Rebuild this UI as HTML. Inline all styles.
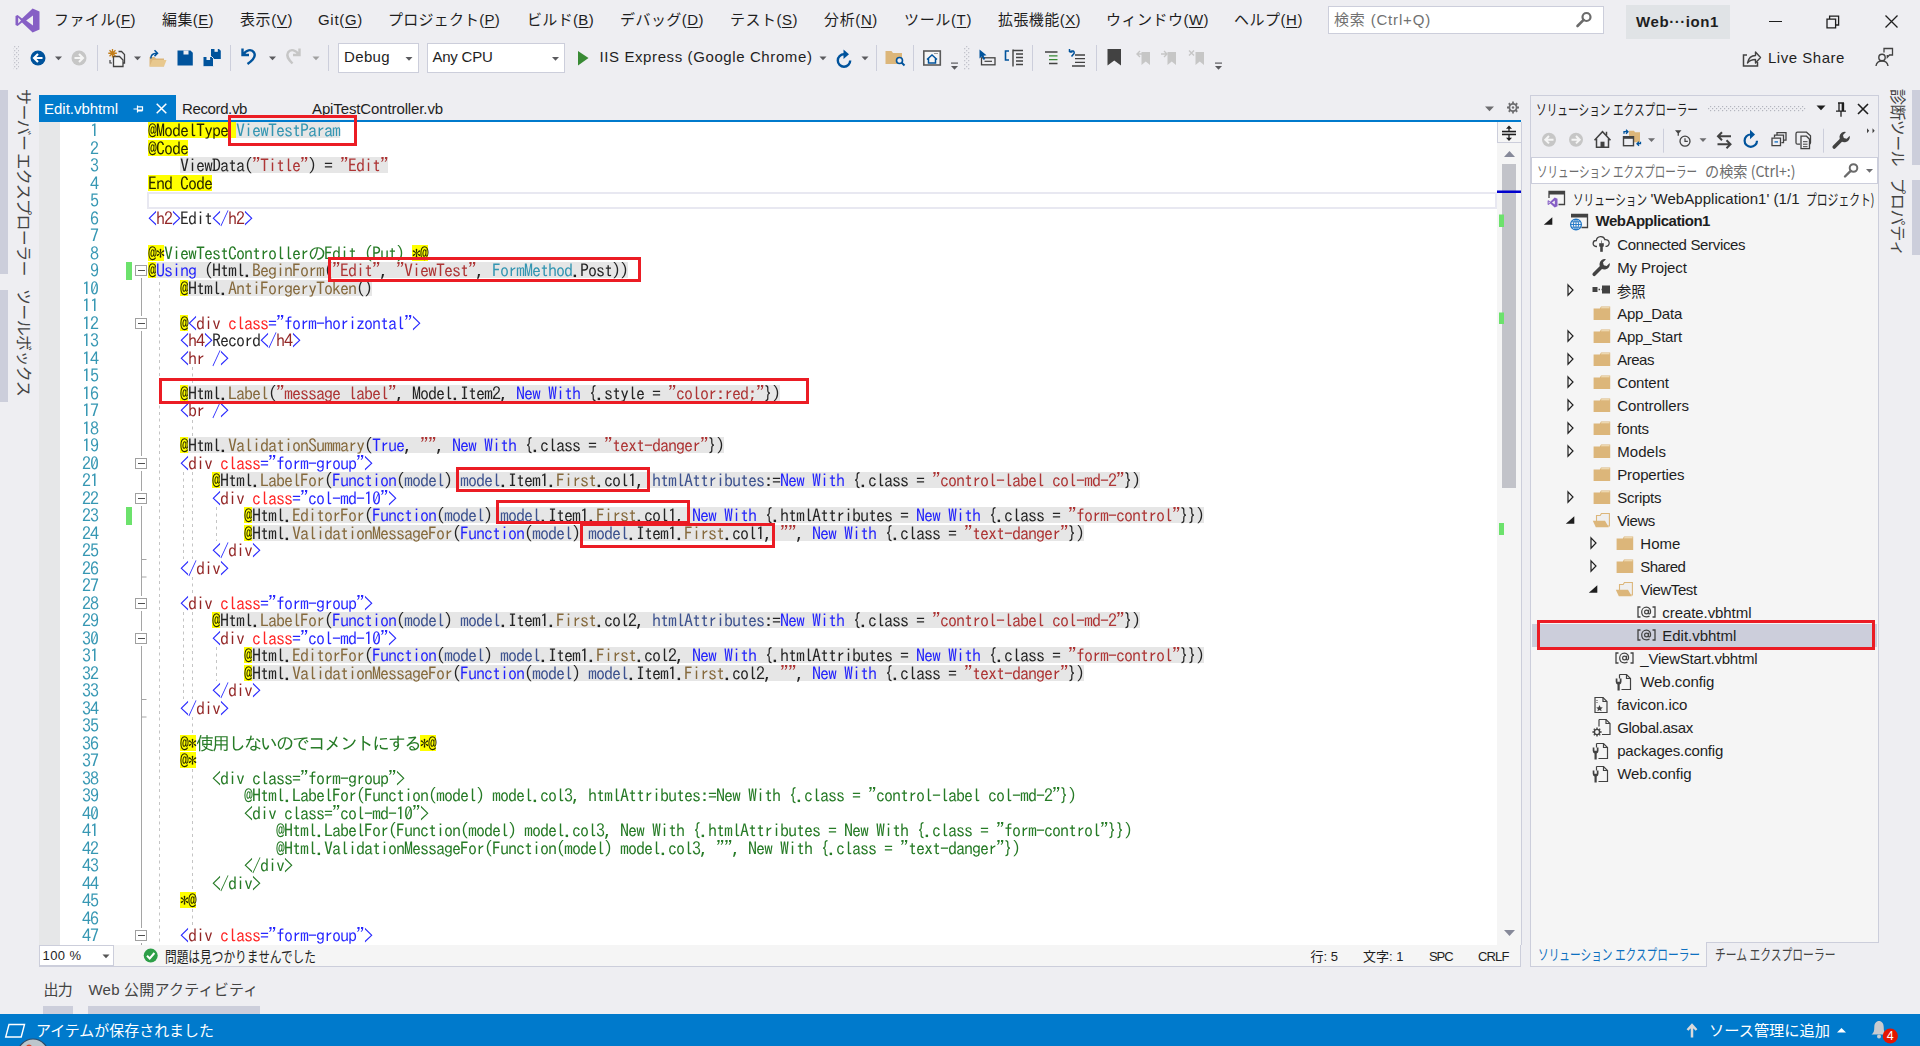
<!DOCTYPE html>
<html lang="ja"><head><meta charset="utf-8"><title>WebApplication1 - Microsoft Visual Studio</title>
<style>
*{box-sizing:border-box;margin:0;padding:0}
html,body{width:1920px;height:1046px;overflow:hidden;background:#EEEEF2}
body{position:relative;font-family:"Liberation Sans","Noto Sans CJK JP",sans-serif;font-size:15px;color:#1E1E1E}
.a{position:absolute;white-space:nowrap}
.t{position:absolute;white-space:nowrap;line-height:20px;height:20px}
u{text-decoration:underline;text-underline-offset:2px}
.menu{top:10px;font-size:15px;}
.jp{font-family:"Noto Sans CJK JP","Liberation Sans",sans-serif}
svg{position:absolute;overflow:visible}
.code{font-family:"IPAGothic","Liberation Mono",monospace;font-size:18px;letter-spacing:-1px;line-height:16px;height:16px;white-space:pre;position:absolute;left:148px;color:rgba(0,0,0,.85);will-change:transform}
.code span{display:inline-block;height:16px;vertical-align:top}
.ln{position:absolute;left:60px;width:38px;text-align:right;font-family:"IPAGothic","Liberation Mono",monospace;font-size:18px;letter-spacing:-1px;line-height:16px;height:16px;color:rgba(43,145,175,.95);will-change:transform}
.y{background:#FFFF00}.g{background:#E6E6E6}
.kw{color:rgba(0,0,255,0.85)}.st{color:rgba(163,21,21,0.85)}.ty{color:rgba(43,145,175,0.95)}.fn{color:rgba(116,83,31,0.85)}.pm{color:rgba(31,55,127,0.85)}
.tg{color:rgba(128,0,0,0.85)}.at{color:rgba(255,0,0,0.85)}.cm{color:rgba(0,100,0,0.85)}
.red{position:absolute;border:3px solid #EB1C24}
.fw{letter-spacing:-2px}
.tree{position:absolute;font-size:15px;line-height:20px;height:20px;white-space:nowrap;color:#1E1E1E}
</style></head><body>
<!-- ===== title / menu bar ===== -->
<svg style="left:15px;top:8px" width="25" height="25" viewBox="0 0 25 25"><path d="M17.6 0.5 L24.5 3.4 V21.6 L17.6 24.5 L7 14.6 L2.6 18.1 L0.5 17 V8 L2.6 6.9 L7 10.4 Z M3.2 9.6 V15.4 L6 12.5 Z M11.2 12.5 L18 17.6 V7.4 Z" fill="#865FC5" fill-rule="evenodd"/></svg>
<span class="t menu" style="letter-spacing:0.404px;left:54px">ファイル(<u>F</u>)</span>
<span class="t menu" style="letter-spacing:0.397px;left:162px">編集(<u>E</u>)</span>
<span class="t menu" style="letter-spacing:0.597px;left:240px">表示(<u>V</u>)</span>
<span class="t menu" style="letter-spacing:0.693px;left:318px">Git(<u>G</u>)</span>
<span class="t menu" style="letter-spacing:0.220px;left:388px">プロジェクト(<u>P</u>)</span>
<span class="t menu" style="letter-spacing:0.331px;left:527px">ビルド(<u>B</u>)</span>
<span class="t menu" style="letter-spacing:0.451px;left:620px">デバッグ(<u>D</u>)</span>
<span class="t menu" style="letter-spacing:0.497px;left:730px">テスト(<u>S</u>)</span>
<span class="t menu" style="letter-spacing:0.631px;left:824px">分析(<u>N</u>)</span>
<span class="t menu" style="letter-spacing:0.638px;left:904px">ツール(<u>T</u>)</span>
<span class="t menu" style="letter-spacing:0.426px;left:998px">拡張機能(<u>X</u>)</span>
<span class="t menu" style="letter-spacing:0.479px;left:1106px">ウィンドウ(<u>W</u>)</span>
<span class="t menu" style="letter-spacing:0.526px;left:1234px">ヘルプ(<u>H</u>)</span>
<div class="a" style="left:1328px;top:6px;width:276px;height:28px;background:#fff;border:1px solid #CCCEDB"></div>
<span class="t" style="letter-spacing:0.825px;left:1334px;top:10px;color:#717171">検索 (Ctrl+Q)</span>
<svg style="left:1576px;top:11px" width="17" height="17" viewBox="0 0 17 17"><circle cx="10.5" cy="6" r="4" fill="none" stroke="#6B6B6B" stroke-width="2.2"/><path d="M7.6 8.9 L1.5 15" stroke="#6B6B6B" stroke-width="2.6" stroke-linecap="round"/></svg>
<div class="a" style="left:1626px;top:5px;width:104px;height:34px;background:#E0E3E6"></div>
<span class="t" style="letter-spacing:0.578px;left:1636px;top:12px;font-weight:bold;font-size:15px">Web···ion1</span>
<div class="a" style="left:1769px;top:20.5px;width:13px;height:1.3px;background:#1E1E1E"></div>
<svg style="left:1826px;top:15px" width="14" height="14" viewBox="0 0 14 14"><path d="M1 4.2 h8.6 v8.6 h-8.6 z M3.6 4 v-2.8 h9 v8.8 h-2.8" fill="none" stroke="#1E1E1E" stroke-width="1.3"/></svg>
<svg style="left:1885px;top:15px" width="13" height="13" viewBox="0 0 13 13"><path d="M0.5 0.5 L12.5 12.5 M12.5 0.5 L0.5 12.5" stroke="#1E1E1E" stroke-width="1.3"/></svg>
<!-- ===== toolbar ===== -->
<svg style="left:0;top:40px" width="1920" height="40" viewBox="0 40 1920 40">
<defs>
<pattern id="grip" width="4" height="4" patternUnits="userSpaceOnUse"><rect x="0" y="0" width="1.3" height="1.3" fill="#C3C4CC"/><rect x="2" y="2" width="1.3" height="1.3" fill="#C3C4CC"/></pattern>
</defs>
<rect x="13" y="46" width="6" height="24" fill="url(#grip)"/>
<rect x="964" y="46" width="6" height="24" fill="url(#grip)"/>
<rect x="338.5" y="43.500" width="80" height="29" fill="#fff" stroke="#CCCEDB"/>
<rect x="427.500" y="43.500" width="137" height="29" fill="#fff" stroke="#CCCEDB"/>
<g fill="#5A5A5E">
<path d="M55 56.5 h7 l-3.5 3.8z"/><path d="M134 56.5 h7 l-3.5 3.8z"/><path d="M269 56.5 h7 l-3.5 3.8z"/>
<path d="M405.5 57 h7 l-3.5 3.8z"/><path d="M552 57 h7 l-3.5 3.8z"/>
<path d="M819.5 56.5 h7 l-3.5 3.8z"/><path d="M861.5 56.5 h7 l-3.5 3.8z"/>
<path d="M951 66 h7 l-3.5 3.8z"/><rect x="951" y="62.5" width="7" height="1.2"/>
<path d="M1215 66 h7 l-3.5 3.8z"/><rect x="1215" y="62.5" width="7" height="1.2"/>
</g>
<path d="M312.5 56.5 h7 l-3.5 3.8z" fill="#A0A0A0"/>
<g stroke="#CCCEDB" stroke-width="1"><path d="M97.5 45v26M230.5 45v26M328.5 45v26M876.5 45v26M913.5 45v26M1032.5 45v26M1096.5 45v26"/></g>
<!-- back / forward -->
<circle cx="38" cy="58" r="7.500" fill="#00539C"/><path d="M42.500 58 H34.500 M38 54 L34 58 L38 62" fill="none" stroke="#fff" stroke-width="2.100"/>
<circle cx="79" cy="58" r="7.500" fill="#C6C6C6"/><path d="M74.500 58 H82.500 M79 54 L83 58 L79 62" fill="none" stroke="#F5F5F5" stroke-width="2.100"/>
<!-- new item -->
<path d="M118.500 51.500 h3 l3 3 v8.500 h-1.500" fill="none" stroke="#424242" stroke-width="1.300"/>
<path d="M113.500 56.500 h6 l3.500 3.500 v6.500 h-9.500 z" fill="#F5F5F5" stroke="#424242" stroke-width="1.300"/>
<path d="M110 60 v3 h2" fill="none" stroke="#424242" stroke-width="1.200"/>
<path d="M112.500 49 v8.500 M108.300 53.250 h8.500 M109.500 50.300 l6 6 M115.500 50.300 l-6 6" stroke="#C27D1A" stroke-width="1.300"/>
<!-- open folder -->
<path d="M149.500 57 h5 l1.500 1.500 h8 v8 h-14.500 z" fill="#DCB67A"/><path d="M152.500 60 h14 l-2.500 6.500 h-14.500 z" fill="#E8C88E"/>
<path d="M150.800 58.500 c0-3.500 2-5.300 6-5.300 M154.500 50.300 l3 2.900 l-3 2.900" fill="none" stroke="#00539C" stroke-width="1.500"/>
<!-- save -->
<path d="M177.500 50.500 h13 l2.300 2.300 v12.700 h-15.300 z" fill="#00539C"/><rect x="183.500" y="50.500" width="5" height="4" fill="#EEEEF2"/>
<!-- save all -->
<path d="M211 49 h8 l1.800 1.800 v8.200 h-9.800 z" fill="#00539C"/><rect x="214.500" y="49" width="3.300" height="2.800" fill="#EEEEF2"/>
<path d="M203 56.500 h8.500 l2 2 v8.200 h-10.500 z" fill="#00539C" stroke="#EEEEF2" stroke-width="1"/><rect x="206.500" y="57" width="3.600" height="3" fill="#EEEEF2"/>
<!-- undo -->
<path d="M242.500 48.500 v6.500 h6.500 M243.500 54.500 c2-4.500 8-6 10.500-2 c2 3.500-0.500 7.500-6.500 11.500" fill="none" stroke="#00539C" stroke-width="2.4"/>
<!-- redo disabled -->
<path d="M299.500 48.500 v6.500 h-6.500 M298.500 54.500 c-2-4.500-8-6-10.500-2 c-2 3.500 0 6.500 4.500 11" fill="none" stroke="#C6C6C6" stroke-width="2.400"/>
<!-- play -->
<path d="M578 51 L588.500 58 L578 65.500 z" fill="#388A34"/>
<!-- refresh -->
<path d="M850.200 60.500 a6.200 6.200 0 1 1 -6.200-6.200" fill="none" stroke="#00539C" stroke-width="2.400"/><path d="M843.500 49.500 l5.500 4.800 l-5.500 4.800 z" fill="#00539C"/>
<!-- folder search -->
<path d="M885.5 51 h6 l1.500 2 h9 v11 h-16.500 z" fill="#DCB67A"/><circle cx="899.5" cy="60.500" r="3" fill="#EEEEF2" stroke="#00539C" stroke-width="1.600"/><path d="M901.500 62.500 l3 3" stroke="#00539C" stroke-width="2"/>
<!-- browser -->
<rect x="923.800" y="51" width="16.500" height="14" fill="#F5F5F5" stroke="#5A5A5A" stroke-width="1.600"/><path d="M927 59.500 l5-4.500 l5 4.500 M928.500 58.500 v4.500 h7 v-4.500" fill="none" stroke="#00539C" stroke-width="1.500"/><path d="M934.500 53.500 h1 M936.500 53.500 h1" stroke="#424242" stroke-width="1"/>
<!-- cursor+box -->
<rect x="981.500" y="57.800" width="13.500" height="7" fill="#EEEEF2" stroke="#424242" stroke-width="1.300"/><path d="M984.500 61.300h7.500" stroke="#424242" stroke-width="1.200"/>
<path d="M979.500 49.500 l0 9 l2.300-2 l1.800 3.500 l1.700-0.900 l-1.800-3.400 l3-0.400 z" fill="#00539C"/>
<!-- icon2 -->
<path d="M1009 51 h-3.500 v9 h3.500" fill="none" stroke="#00539C" stroke-width="1.600"/><path d="M1013 49.500 v17" stroke="#424242" stroke-width="1.400"/><path d="M1013 50.500 h10 M1016 54 h7 M1016 57.500 h7 M1016 61 h7 M1016 64.500 h7" stroke="#424242" stroke-width="1.300"/>
<!-- indent icons -->
<path d="M1045 52 h12.500 M1049 63.500 h8.500" stroke="#424242" stroke-width="1.300"/><path d="M1049 55.800 h8.500 M1049 59.600 h8.500" stroke="#388A34" stroke-width="1.300"/>
<path d="M1075 55 h10 M1075 58.700 h10 M1075 62.300 h10 M1072 66 h13" stroke="#424242" stroke-width="1.300"/><path d="M1070 52 c2-2 5-1 4 1.500 l-2.500 3 M1069.500 52 v-3 M1069.500 52 h3" fill="none" stroke="#00539C" stroke-width="1.500"/>
<!-- bookmarks -->
<path d="M1107.500 49 h13.500 v16.500 l-6.750-5 l-6.750 5 z" fill="#424242"/>
<g fill="#C6C6C6"><path d="M1141.500 52 h8.500 v13 l-4.250-3.500 l-4.250 3.500 z"/><path d="M1167.500 52 h8.500 v13 l-4.250-3.500 l-4.250 3.500 z"/><path d="M1195.500 52 h8.500 v13 l-4.250-3.500 l-4.250 3.500 z"/></g>
<g stroke="#C6C6C6" stroke-width="1.400" fill="none"><path d="M1143 54 h-6 M1140 51 l-3 3 l3 3"/><path d="M1161 54 h6 M1164 51 l3 3 l-3 3"/><path d="M1189 50.500 l5 5 M1194 50.500 l-5 5"/></g>
<!-- live share -->
<path d="M1747 55 h-3.500 v11 h14 v-4" fill="none" stroke="#424242" stroke-width="1.500"/><path d="M1747.500 63 c1-5 4-7.500 8-7.500 v-3.500 l5 5.500 l-5 5.500 v-3.500 c-3.500 0-6 1-8 3.500 z" fill="none" stroke="#424242" stroke-width="1.400" stroke-linejoin="round"/>
<!-- feedback -->
<circle cx="1882" cy="57.500" r="3.200" fill="none" stroke="#424242" stroke-width="1.400"/><path d="M1876 66 c0.500-4 3-5 6-5 s5.500 1 6 5" fill="none" stroke="#424242" stroke-width="1.400"/><path d="M1884 52.500 v-4 h8.500 v6.500 h-3 l-2.200 2.300 v-2.300" fill="none" stroke="#424242" stroke-width="1.300"/>
</svg>
<span class="t" style="letter-spacing:0.359px;left:344px;top:47px">Debug</span>
<span class="t" style="letter-spacing:-0.241px;left:432.500px;top:47px">Any CPU</span>
<span class="t" style="letter-spacing:0.602px;left:599.500px;top:47px">IIS Express (Google Chrome)</span>
<span class="t" style="letter-spacing:0.528px;left:1768px;top:47.500px">Live Share</span>
<!-- ===== left autohide strip ===== -->
<div class="a" style="left:0;top:90px;width:8px;height:184px;background:#CCCEDB"></div>
<div class="a" style="left:0;top:290px;width:8px;height:112px;background:#CCCEDB"></div>
<span class="a jp" style="letter-spacing:-0.612px;left:15px;top:88.500px;writing-mode:vertical-rl;text-orientation:sideways;font-size:16px;line-height:20px;width:20px;color:#444">サーバー エクスプローラー</span>
<span class="a jp" style="letter-spacing:-0.647px;left:15px;top:288.500px;writing-mode:vertical-rl;text-orientation:sideways;font-size:16px;line-height:20px;width:20px;color:#444">ツールボックス</span>
<!-- ===== document tabs ===== -->
<div class="a" style="left:39px;top:95px;width:137px;height:26px;background:#007ACC"></div>
<span class="t" style="letter-spacing:-0.018px;left:44px;top:98.700px;color:#fff">Edit.vbhtml</span>
<svg style="left:133px;top:102.700px" width="12" height="12" viewBox="0 0 12 12"><path d="M0.5 6 h4 M4.500 2.500 v7 M4.500 3.800 h5 v3.400 h-5 M4.500 8 h5" fill="none" stroke="#fff" stroke-width="1.200"/></svg>
<svg style="left:156px;top:102.700px" width="11" height="11" viewBox="0 0 11 11"><path d="M0.700 0.700 L10.300 10.300 M10.300 0.700 L0.700 10.300" stroke="#fff" stroke-width="1.500"/></svg>
<span class="t" style="letter-spacing:-0.375px;left:182px;top:98.700px">Record.vb</span>
<span class="t" style="letter-spacing:-0.120px;left:312px;top:98.700px">ApiTestController.vb</span>
<svg style="left:1484px;top:100px" width="36" height="18" viewBox="1484 100 36 18"><path d="M1485 106.500 h9 l-4.500 4.800 z" fill="#6D6D70"/>
<g transform="translate(1513 107.500)" fill="#6D6D70"><circle r="3.600" fill="none" stroke="#6D6D70" stroke-width="1.800"/><circle r="1.200" fill="#6D6D70"/><g stroke="#6D6D70" stroke-width="1.800"><path d="M0 -6 V-3.500 M0 6 V3.500 M-6 0 H-3.500 M6 0 H3.500 M-4.250 -4.250 L-2.600 -2.600 M4.250 4.250 L2.600 2.600 M-4.250 4.250 L-2.600 2.600 M4.250 -4.250 L2.600 -2.600"/></g></g></svg>
<div class="a" style="left:39px;top:120px;width:1482px;height:2px;background:#007ACC"></div>
<!-- ===== editor ===== -->
<div class="a" style="left:39px;top:122px;width:1458px;height:823px;background:#fff"></div>
<div class="a" style="left:39px;top:122px;width:21px;height:823px;background:#E6E7E8"></div>
<!-- current line -->
<div class="a" style="left:147px;top:192px;width:1350px;height:17px;border:2px solid #E8E8F1"></div>
<!-- change bars -->
<div class="a" style="left:126px;top:262px;width:6px;height:17.500px;background:#6CE26C"></div>
<div class="a" style="left:126px;top:507px;width:6px;height:17.500px;background:#6CE26C"></div>
<!-- outlining + indent guides -->
<svg style="left:130px;top:122px" width="100" height="823" viewBox="130 122 100 823">
<g stroke="#A5A5A5" stroke-width="1" fill="none">
<path d="M141.500 278 V316 M141.500 331 V456 M141.500 471 V491 M141.500 506 V596 M141.500 611 V631 M141.500 646 V928 M141.500 943 V945"/>
<path d="M141.500 559.500 h5 M141.500 577 h5 M141.500 699.500 h5 M141.500 717 h5"/>
</g>
<g stroke="#C4C4C4" stroke-width="1" stroke-dasharray="3 3.500" fill="none">
<path d="M159.500 282 V945"/><path d="M192.500 367 V384"/><path d="M192.500 420 V437"/>
<path d="M183.500 472 V559"/><path d="M192.500 472 V559"/><path d="M216.500 507 V541"/>
<path d="M183.500 612 V699"/><path d="M192.500 612 V699"/><path d="M216.500 647 V681"/>
<path d="M192.500 577 V594"/><path d="M192.500 717 V734"/><path d="M192.500 769 V892"/><path d="M192.500 909 V927"/>
</g>
<g fill="#fff" stroke="#A0A0A0" stroke-width="1"><rect x="135.500" y="265.5" width="11" height="10"/><rect x="135.500" y="318.5" width="11" height="10"/><rect x="135.500" y="458.5" width="11" height="10"/><rect x="135.500" y="493.5" width="11" height="10"/><rect x="135.500" y="598.5" width="11" height="10"/><rect x="135.500" y="633.5" width="11" height="10"/><rect x="135.500" y="930.5" width="11" height="10"/></g>
<path d="M138 270.5 h7 M138 323.5 h7 M138 463.5 h7 M138 498.5 h7 M138 603.5 h7 M138 638.5 h7 M138 935.5 h7" stroke="#505050" stroke-width="1.200"/>
</svg>
<div class="ln" style="top:122.0px">1</div>
<div class="code" style="top:122.0px"><span class="y">@ModelType </span><span class="g"><span class="ty">ViewTestParam</span></span></div>
<div class="ln" style="top:139.5px">2</div>
<div class="code" style="top:139.5px"><span class="y">@Code</span></div>
<div class="ln" style="top:157.0px">3</div>
<div class="code" style="top:157.0px">    <span class="g">ViewData(<span class="st">"Title"</span>) = <span class="st">"Edit"</span></span></div>
<div class="ln" style="top:174.5px">4</div>
<div class="code" style="top:174.5px"><span class="y">End Code</span></div>
<div class="ln" style="top:192.0px">5</div>
<div class="ln" style="top:209.5px">6</div>
<div class="code" style="top:209.5px"><span class="kw">&lt;</span><span class="tg">h2</span><span class="kw">&gt;</span>Edit<span class="kw">&lt;/</span><span class="tg">h2</span><span class="kw">&gt;</span></div>
<div class="ln" style="top:227.0px">7</div>
<div class="ln" style="top:244.5px">8</div>
<div class="code" style="top:244.5px"><span class="y">@*</span><span class="cm">ViewTestController<span class="fw">の</span>Edit (Put) </span><span class="y">*@</span></div>
<div class="ln" style="top:262.0px">9</div>
<div class="code" style="top:262.0px"><span class="y">@</span><span class="g"><span class="kw">Using</span> (Html.<span class="fn">BeginForm</span>(<span class="st">"Edit"</span>, <span class="st">"ViewTest"</span>, <span class="ty">FormMethod</span>.Post))</span></div>
<div class="ln" style="top:279.5px">10</div>
<div class="code" style="top:279.5px">    <span class="y">@</span><span class="g">Html.<span class="fn">AntiForgeryToken</span>()</span></div>
<div class="ln" style="top:297.0px">11</div>
<div class="ln" style="top:314.5px">12</div>
<div class="code" style="top:314.5px">    <span class="y">@</span><span class="kw">&lt;</span><span class="tg">div</span> <span class="at">class</span><span class="kw">="form-horizontal"&gt;</span></div>
<div class="ln" style="top:332.0px">13</div>
<div class="code" style="top:332.0px">    <span class="kw">&lt;</span><span class="tg">h4</span><span class="kw">&gt;</span>Record<span class="kw">&lt;/</span><span class="tg">h4</span><span class="kw">&gt;</span></div>
<div class="ln" style="top:349.5px">14</div>
<div class="code" style="top:349.5px">    <span class="kw">&lt;</span><span class="tg">hr</span> <span class="kw">/&gt;</span></div>
<div class="ln" style="top:367.0px">15</div>
<div class="ln" style="top:384.5px">16</div>
<div class="code" style="top:384.5px">    <span class="y">@</span><span class="g">Html.<span class="fn">Label</span>(<span class="st">"message_label"</span>, Model.Item2, <span class="kw">New</span> <span class="kw">With</span> {.style = <span class="st">"color:red;"</span>})</span></div>
<div class="ln" style="top:402.0px">17</div>
<div class="code" style="top:402.0px">    <span class="kw">&lt;</span><span class="tg">br</span> <span class="kw">/&gt;</span></div>
<div class="ln" style="top:419.5px">18</div>
<div class="ln" style="top:437.0px">19</div>
<div class="code" style="top:437.0px">    <span class="y">@</span><span class="g">Html.<span class="fn">ValidationSummary</span>(<span class="kw">True</span>, <span class="st">""</span>, <span class="kw">New</span> <span class="kw">With</span> {.class = <span class="st">"text-danger"</span>})</span></div>
<div class="ln" style="top:454.5px">20</div>
<div class="code" style="top:454.5px">    <span class="kw">&lt;</span><span class="tg">div</span> <span class="at">class</span><span class="kw">="form-group"&gt;</span></div>
<div class="ln" style="top:472.0px">21</div>
<div class="code" style="top:472.0px">        <span class="y">@</span><span class="g">Html.<span class="fn">LabelFor</span>(<span class="kw">Function</span>(<span class="pm">model</span>) <span class="pm">model</span>.Item1.<span class="fn">First</span>.col1, <span class="pm">htmlAttributes</span>:=<span class="kw">New</span> <span class="kw">With</span> {.class = <span class="st">"control-label col-md-2"</span>})</span></div>
<div class="ln" style="top:489.5px">22</div>
<div class="code" style="top:489.5px">        <span class="kw">&lt;</span><span class="tg">div</span> <span class="at">class</span><span class="kw">="col-md-10"&gt;</span></div>
<div class="ln" style="top:507.0px">23</div>
<div class="code" style="top:507.0px">            <span class="y">@</span><span class="g">Html.<span class="fn">EditorFor</span>(<span class="kw">Function</span>(<span class="pm">model</span>) <span class="pm">model</span>.Item1.<span class="fn">First</span>.col1, <span class="kw">New</span> <span class="kw">With</span> {.htmlAttributes = <span class="kw">New</span> <span class="kw">With</span> {.class = <span class="st">"form-control"</span>}})</span></div>
<div class="ln" style="top:524.5px">24</div>
<div class="code" style="top:524.5px">            <span class="y">@</span><span class="g">Html.<span class="fn">ValidationMessageFor</span>(<span class="kw">Function</span>(<span class="pm">model</span>) <span class="pm">model</span>.Item1.<span class="fn">First</span>.col1, <span class="st">""</span>, <span class="kw">New</span> <span class="kw">With</span> {.class = <span class="st">"text-danger"</span>})</span></div>
<div class="ln" style="top:542.0px">25</div>
<div class="code" style="top:542.0px">        <span class="kw">&lt;/</span><span class="tg">div</span><span class="kw">&gt;</span></div>
<div class="ln" style="top:559.5px">26</div>
<div class="code" style="top:559.5px">    <span class="kw">&lt;/</span><span class="tg">div</span><span class="kw">&gt;</span></div>
<div class="ln" style="top:577.0px">27</div>
<div class="ln" style="top:594.5px">28</div>
<div class="code" style="top:594.5px">    <span class="kw">&lt;</span><span class="tg">div</span> <span class="at">class</span><span class="kw">="form-group"&gt;</span></div>
<div class="ln" style="top:612.0px">29</div>
<div class="code" style="top:612.0px">        <span class="y">@</span><span class="g">Html.<span class="fn">LabelFor</span>(<span class="kw">Function</span>(<span class="pm">model</span>) <span class="pm">model</span>.Item1.<span class="fn">First</span>.col2, <span class="pm">htmlAttributes</span>:=<span class="kw">New</span> <span class="kw">With</span> {.class = <span class="st">"control-label col-md-2"</span>})</span></div>
<div class="ln" style="top:629.5px">30</div>
<div class="code" style="top:629.5px">        <span class="kw">&lt;</span><span class="tg">div</span> <span class="at">class</span><span class="kw">="col-md-10"&gt;</span></div>
<div class="ln" style="top:647.0px">31</div>
<div class="code" style="top:647.0px">            <span class="y">@</span><span class="g">Html.<span class="fn">EditorFor</span>(<span class="kw">Function</span>(<span class="pm">model</span>) <span class="pm">model</span>.Item1.<span class="fn">First</span>.col2, <span class="kw">New</span> <span class="kw">With</span> {.htmlAttributes = <span class="kw">New</span> <span class="kw">With</span> {.class = <span class="st">"form-control"</span>}})</span></div>
<div class="ln" style="top:664.5px">32</div>
<div class="code" style="top:664.5px">            <span class="y">@</span><span class="g">Html.<span class="fn">ValidationMessageFor</span>(<span class="kw">Function</span>(<span class="pm">model</span>) <span class="pm">model</span>.Item1.<span class="fn">First</span>.col2, <span class="st">""</span>, <span class="kw">New</span> <span class="kw">With</span> {.class = <span class="st">"text-danger"</span>})</span></div>
<div class="ln" style="top:682.0px">33</div>
<div class="code" style="top:682.0px">        <span class="kw">&lt;/</span><span class="tg">div</span><span class="kw">&gt;</span></div>
<div class="ln" style="top:699.5px">34</div>
<div class="code" style="top:699.5px">    <span class="kw">&lt;/</span><span class="tg">div</span><span class="kw">&gt;</span></div>
<div class="ln" style="top:717.0px">35</div>
<div class="ln" style="top:734.5px">36</div>
<div class="code" style="top:734.5px">    <span class="y">@*</span><span class="cm"><span class="fw">使用しないのでコメントにする</span></span><span class="y">*@</span></div>
<div class="ln" style="top:752.0px">37</div>
<div class="code" style="top:752.0px">    <span class="y">@*</span></div>
<div class="ln" style="top:769.5px">38</div>
<div class="code" style="top:769.5px"><span class="cm">        &lt;div class="form-group"&gt;</span></div>
<div class="ln" style="top:787.0px">39</div>
<div class="code" style="top:787.0px"><span class="cm">            @Html.LabelFor(Function(model) model.col3, htmlAttributes:=New With {.class = "control-label col-md-2"})</span></div>
<div class="ln" style="top:804.5px">40</div>
<div class="code" style="top:804.5px"><span class="cm">            &lt;div class="col-md-10"&gt;</span></div>
<div class="ln" style="top:822.0px">41</div>
<div class="code" style="top:822.0px"><span class="cm">                @Html.LabelFor(Function(model) model.col3, New With {.htmlAttributes = New With {.class = "form-control"}})</span></div>
<div class="ln" style="top:839.5px">42</div>
<div class="code" style="top:839.5px"><span class="cm">                @Html.ValidationMessageFor(Function(model) model.col3, "", New With {.class = "text-danger"})</span></div>
<div class="ln" style="top:857.0px">43</div>
<div class="code" style="top:857.0px"><span class="cm">            &lt;/div&gt;</span></div>
<div class="ln" style="top:874.5px">44</div>
<div class="code" style="top:874.5px"><span class="cm">        &lt;/div&gt;</span></div>
<div class="ln" style="top:892.0px">45</div>
<div class="code" style="top:892.0px">    <span class="y">*@</span></div>
<div class="ln" style="top:909.5px">46</div>
<div class="ln" style="top:927.0px">47</div>
<div class="code" style="top:927.0px">    <span class="kw">&lt;</span><span class="tg">div</span> <span class="at">class</span><span class="kw">="form-group"&gt;</span></div>
<!-- red annotation boxes -->
<div class="red" style="left:228px;top:115px;width:129px;height:31px"></div>
<div class="red" style="left:328px;top:257px;width:313px;height:25px"></div>
<div class="red" style="left:159px;top:378px;width:650px;height:26px"></div>
<div class="red" style="left:456px;top:467px;width:194px;height:25px"></div>
<div class="red" style="left:496px;top:500px;width:194px;height:24px"></div>
<div class="red" style="left:580px;top:523px;width:195px;height:25px"></div>
<!-- ===== vertical scrollbar ===== -->
<div class="a" style="left:1497px;top:122px;width:25px;height:823px;background:#F5F5F5;border-right:1px solid #CCCEDB"></div>
<div class="a" style="left:1497px;top:122px;width:25px;height:21px;background:#F5F5F5;border:1px solid #CCCEDB;border-top:none"></div>
<svg style="left:1497px;top:122px" width="24" height="823" viewBox="1497 122 24 823">
<rect x="1502" y="131" width="14" height="4" fill="#ABABAB"/><path d="M1502 131.300 h14 M1502 134.700 h14 M1509 127 v4 M1509 135 v4.500" fill="none" stroke="#1E1E1E" stroke-width="1.300"/><path d="M1506 128.800 l3-3.300 l3 3.300 z M1506 137.700 l3 3.300 l3-3.300 z" fill="#1E1E1E"/>
<path d="M1504 157 h11 l-5.500-6 z" fill="#868999"/>
<path d="M1504 930 h11 l-5.500 6 z" fill="#868999"/>
<rect x="1502" y="164" width="14" height="324" fill="#C2C3C9"/>
<rect x="1497" y="190.500" width="24" height="2.500" fill="#0000CD"/>
<g fill="#6CE26C"><rect x="1499" y="214.500" width="5" height="12.500"/><rect x="1499" y="312.500" width="5" height="11.500"/><rect x="1499" y="523" width="5" height="12"/></g>
</svg>
<!-- ===== editor bottom bar ===== -->
<div class="a" style="left:39px;top:945px;width:1482px;height:22px;background:#F5F5F5;border:1px solid #CCCEDB;border-top:none"></div>
<div class="a" style="left:39px;top:945px;width:75px;height:21px;background:#fff;border:1px solid #CCCEDB"></div>
<span class="t" style="letter-spacing:0.425px;left:42.500px;top:946px;font-size:13px">100 %</span>
<svg style="left:100px;top:950px" width="220" height="14" viewBox="100 950 220 14"><path d="M102.500 954.500 h7 l-3.500 3.800 z" fill="#555"/>
<circle cx="150.700" cy="955.600" r="7" fill="#2E9F48"/><path d="M147 955.700 l2.700 2.800 l4.700-5.500" fill="none" stroke="#fff" stroke-width="2"/></svg>
<span class="t jp" style="display:inline-block;transform-origin:0 50%;transform:scaleX(0.7791);left:164.500px;top:945.500px;font-size:15px">問題は見つかりませんでした</span>
<span class="t" style="letter-spacing:0.008px;left:1310.500px;top:947px;font-size:13px">行: 5</span>
<span class="t" style="letter-spacing:0.006px;left:1363px;top:947px;font-size:13px">文字: 1</span>
<span class="t" style="letter-spacing:-1.078px;left:1429px;top:947px;font-size:13px">SPC</span>
<span class="t" style="letter-spacing:-0.863px;left:1478px;top:947px;font-size:13px">CRLF</span>
<!-- ===== bottom tool tabs ===== -->
<span class="t" style="letter-spacing:-0.758px;left:43.500px;top:979.500px;color:#444">出力</span>
<span class="t" style="letter-spacing:0.215px;left:88.500px;top:979.500px;color:#444">Web 公開アクティビティ</span>
<div class="a" style="left:43px;top:1006px;width:30px;height:8px;background:#CCCEDB"></div>
<div class="a" style="left:88px;top:1006px;width:172px;height:8px;background:#CCCEDB"></div>
<!-- ===== status bar ===== -->
<div class="a" style="left:0;top:1014px;width:1920px;height:32px;background:#007ACC"></div>
<svg style="left:0;top:1014px" width="1920" height="32" viewBox="0 1014 1920 32">
<path d="M9 1024.500 h15.500 l-3.300 12.500 h-15.500 z" fill="none" stroke="#fff" stroke-width="1.400"/>
<ellipse cx="33" cy="1056" rx="16" ry="17" fill="#BCC6CC" stroke="#2E4A66" stroke-width="1.200"/><circle cx="29" cy="1047.500" r="3" fill="#D9482B"/>
<path d="M1692 1037.500 v-12 M1687.500 1030 l4.500-4.800 l4.500 4.800" fill="none" stroke="#DADADA" stroke-width="2.500"/>
<path d="M1837 1032.500 h9 l-4.500-4.600 z" fill="#fff"/>
<path d="M1871.500 1034.500 c2.200-1.500 2.800-3.500 2.800-7.500 c0-3.500 2-6 4.700-6 s4.700 2.500 4.700 6 c0 4 0.600 6 2.800 7.500 z" fill="#C9CBCF"/><circle cx="1879" cy="1036.500" r="2" fill="#C9CBCF"/>
<circle cx="1890.300" cy="1036" r="7.600" fill="#E51400"/>
</svg>
<span class="t jp" style="display:inline-block;transform-origin:0 50%;transform:scaleX(0.9971);left:35.500px;top:1019.500px;color:#fff">アイテムが保存されました</span>
<span class="t jp" style="display:inline-block;transform-origin:0 50%;transform:scaleX(1.0145);left:1709px;top:1019.500px;color:#fff">ソース管理に追加</span>
<span class="t" style="left:1886.800px;top:1025.500px;color:#fff;font-size:12.500px">4</span>
<!-- ===== solution explorer ===== -->
<div class="a" style="left:1530px;top:95px;width:349px;height:848px;background:#F5F5F5;border:1px solid #CCCEDB"></div>
<div class="a" style="left:1531px;top:96px;width:347px;height:62px;background:#EEEEF2"></div>
<span class="t jp" style="display:inline-block;transform-origin:0 50%;transform:scaleX(0.7117);left:1535.700px;top:99px">ソリューション エクスプローラー</span>
<svg style="left:1531px;top:96px" width="347" height="90" viewBox="1531 96 347 90">
<defs><pattern id="grip2" width="4" height="4" patternUnits="userSpaceOnUse"><rect x="0" y="0" width="1.200" height="1.200" fill="#B4B5BE"/><rect x="2" y="2" width="1.200" height="1.200" fill="#B4B5BE"/></pattern></defs>
<rect x="1708" y="106" width="98" height="6" fill="url(#grip2)"/>
<path d="M1816.500 105.500 h9 l-4.500 4.800 z" fill="#1E1E1E"/>
<path d="M1838 103 h6 M1839 103 v8 M1843.500 103 v8 M1842.300 103 v8 M1836 111.200 h10 M1841 111.200 v5.500" fill="none" stroke="#1E1E1E" stroke-width="1.300"/>
<path d="M1858 104 l10 10 M1868 104 l-10 10" stroke="#1E1E1E" stroke-width="1.600"/>
<g transform="translate(0 -0.800)"><circle cx="1549" cy="140.500" r="7" fill="#C6C6C6"/><path d="M1553.500 140.500 h-7.500 M1549 136.800 l-3.700 3.700 l3.700 3.700" fill="none" stroke="#F5F5F5" stroke-width="2"/>
<circle cx="1576" cy="140.500" r="7" fill="#C6C6C6"/><path d="M1571.500 140.500 h7.500 M1576 136.800 l3.700 3.700 l-3.700 3.700" fill="none" stroke="#F5F5F5" stroke-width="2"/>
<path d="M1594.500 141 l8-8.500 l8 8.500 M1596.500 139.500 v8.500 h12 v-8.500 M1606.500 136 v-3.500" fill="none" stroke="#424242" stroke-width="1.500"/><rect x="1600.500" y="142.500" width="4" height="5.500" fill="#424242"/>
<path d="M1629 131.500 h5 l1 1.500 h5 v10 h-11 z" fill="#DCB67A"/><rect x="1623.500" y="137.500" width="10" height="9" fill="#EEEEF2" stroke="#424242" stroke-width="1.400"/><path d="M1623 138.500 h11" stroke="#424242" stroke-width="2.200"/>
<path d="M1624 134.500 v-2 h3.500 M1626 130.500 l2 2 l-2 2 M1640.500 142.500 v2 h-3.500 M1639 142.500 l-2 2 l2 2" fill="none" stroke="#00539C" stroke-width="1.300"/>
<path d="M1648 139 h7 l-3.500 3.800 z" fill="#6D6D70"/>
<path d="M1663.500 129.500 v24 M1823.500 129.500 v24" stroke="#CCCEDB"/>
<circle cx="1685" cy="142" r="5" fill="none" stroke="#424242" stroke-width="1.300"/><path d="M1685 139 v3.200 h2.800" fill="none" stroke="#424242" stroke-width="1.200"/><path d="M1675 131 h6.500 l-2.600 3 v2.500 h-1.300 v-2.500 z" fill="#424242"/>
<path d="M1699.500 139 h7 l-3.500 3.800 z" fill="#6D6D70"/>
<path d="M1718 137 h13 M1722 133 l-4 4 l4 4 M1730.500 145 h-13 M1726.500 141 l4 4 l-4 4" fill="none" stroke="#424242" stroke-width="2"/>
<path d="M1757 141.500 a6.200 6.200 0 1 1 -6.200-6.200" fill="none" stroke="#00539C" stroke-width="2.200"/><path d="M1750 130.500 l5 4.800 l-5 4.800 z" fill="#00539C"/>
<path d="M1777 135.500 v-2 h9 v7.500 h-2 M1774.500 138 v-2 h9 v7.500 h-2 M1772 139 h8.500 v7.500 h-8.500 z" fill="none" stroke="#424242" stroke-width="1.300"/><path d="M1774.500 142.700 h3.500" stroke="#1B74C5" stroke-width="1.400"/>
<path d="M1800 145 h-2.500 a1.500 1.500 0 0 1 -1.500 -1.500 v-9 a1.500 1.500 0 0 1 1.500 -1.500 h9 l4 3.500 v7 a1.500 1.500 0 0 1 -1.500 1.500 h-1" fill="none" stroke="#424242" stroke-width="1.300"/><path d="M1801 137 h5.500 l3 3 v9.500 h-8.500 z" fill="#EEEEF2" stroke="#424242" stroke-width="1.300"/><path d="M1803 142.500 h4.500 M1803 145 h4.500 M1803 147.500 h4.500" stroke="#424242" stroke-width="1"/>
<g transform="translate(1832 131.500)"><path d="M2.200 16.300 l8-8" stroke="#424242" stroke-width="3.600" stroke-linecap="round"/><path d="M14 1.300 a5.200 5.200 0 1 0 3.700 3.700 l-3 3 l-3-0.700 l-0.700-3 z" fill="#424242"/></g>
<path d="M1867 129 l2.200 2.500 l-2.200 2.500 z M1872.500 129 l2.200 2.500 l-2.200 2.500 z" fill="#424242"/>
</g></svg>
<div class="a" style="left:1531px;top:157px;width:347px;height:27px;background:#fff;border:1px solid #CCCEDB"></div>
<span class="t jp" style="display:inline-block;transform-origin:0 50%;transform:scaleX(0.7029);left:1537.400px;top:161px;color:#6D6D6D">ソリューション エクスプローラー</span>
<span class="t jp" style="display:inline-block;transform-origin:0 50%;transform:scaleX(0.9441);left:1704.700px;top:161px;color:#6D6D6D">の検索 (Ctrl+:)</span>
<svg style="left:1842px;top:162px" width="34" height="17" viewBox="1842 162 34 17"><circle cx="1853.500" cy="168" r="3.800" fill="none" stroke="#6B6B6B" stroke-width="2"/><path d="M1850.700 170.800 L1845 176.500" stroke="#6B6B6B" stroke-width="2.400" stroke-linecap="round"/><path d="M1866 169 h7 l-3.500 3.800 z" fill="#6D6D70"/></svg>
<div class="a" style="left:1532px;top:623.500px;width:345px;height:23.500px;background:#CCCEDB"></div>
<svg style="left:1547.0px;top:189.0px" width="19" height="19" viewBox="0 0 19 19"><path d="M2 9 v-6.500 h15.500 v13 h-6" fill="none" stroke="#424242" stroke-width="1.300"/><path d="M2 2.500 h15.500 v3 h-15.500 z" fill="#424242"/><path d="M7.700 8.500 l2.800 1.200 v7.600 l-2.800 1.200 l-4.400-4 l-1.800 1.400 l-0.900-0.400 v-3.800 l0.900-0.400 l1.800 1.400 z M1.700 12.400 v2.400 l1.200-1.200 z M5 13.500 l2.800 2.100 v-4.200 z" fill="#865FC5" fill-rule="evenodd"/></svg>
<span class="t jp" style="display:inline-block;transform-origin:0 50%;transform:scaleX(0.7068);left:1572.5px;top:188.5px">ソリューション</span>
<svg style="left:1570.0px;top:212.0px" width="19" height="19" viewBox="0 0 19 19"><path d="M1 2.500 h16.500 v13 h-6" fill="none" stroke="#424242" stroke-width="1.300"/><path d="M1 2.500 h16.500 v3 h-16.500 z" fill="#424242"/><circle cx="6" cy="12.500" r="5.400" fill="#F5F5F5" stroke="#1B74C5" stroke-width="1.200"/><path d="M0.600 12.500 h10.800 M6 7.100 v10.800 M1.500 9.800 h9 M1.500 15.200 h9 M6 7.100 c-3.500 3-3.500 7.800 0 10.800 M6 7.100 c3.500 3 3.500 7.800 0 10.800" fill="none" stroke="#1B74C5" stroke-width="0.900"/></svg>
<svg style="left:1543.0px;top:215.5px" width="10" height="10" viewBox="0 0 10 10"><path d="M9.300 1.200 V8.700 H0.800 z" fill="#1E1E1E"/></svg>
<span class="t" style="letter-spacing:-0.460px;left:1595.5px;top:210.5px;font-weight:bold">WebApplication1</span>
<svg style="left:1591.7px;top:235.0px" width="19" height="19" viewBox="0 0 19 19"><path d="M5 11.500 h-1 a3 3 0 0 1 0.300-6 a4.500 4.500 0 0 1 8.700-0.800 a3.400 3.400 0 0 1 1.500 6.700 h-1" fill="none" stroke="#424242" stroke-width="1.300"/><path d="M9.500 5.500 v3 M7.500 8.500 h4 v2.500 l-1 1.200 v4.300 h-2 v-4.300 l-1-1.200 z" fill="#424242" stroke="#424242" stroke-width="0.600"/></svg>
<span class="t" style="letter-spacing:-0.347px;left:1617.2px;top:234.5px">Connected Services</span>
<svg style="left:1591.7px;top:258.0px" width="19" height="19" viewBox="0 0 19 19"><path d="M2.200 16.300 l8-8" stroke="#424242" stroke-width="3.600" stroke-linecap="round"/><path d="M14 1.300 a5.200 5.200 0 1 0 3.700 3.700 l-3 3 l-3-0.700 l-0.700-3 z" fill="#424242"/></svg>
<span class="t" style="letter-spacing:-0.136px;left:1617.2px;top:257.5px">My Project</span>
<svg style="left:1591.7px;top:281.0px" width="19" height="19" viewBox="0 0 19 19"><rect x="0.500" y="6" width="5" height="5" fill="#424242"/><rect x="10" y="4.500" width="8" height="8" fill="#424242"/><path d="M6.500 8.500 h3" stroke="#424242" stroke-width="1.400" stroke-dasharray="1.500 1"/></svg>
<svg style="left:1565.7px;top:282.8px" width="10" height="14" viewBox="0 0 10 14"><path d="M2 1.800 L7 7 L2 12.200 z" fill="none" stroke="#1E1E1E" stroke-width="1.200"/></svg>
<span class="t jp" style="display:inline-block;transform-origin:0 50%;transform:scaleX(0.9528);left:1617.2px;top:280.5px">参照</span>
<svg style="left:1591.7px;top:304.0px" width="19" height="19" viewBox="0 0 19 19"><path d="M1.600 4.500 h6.200 l1.200-2 h9.200 v13.500 h-16.600 z" fill="#DCB67A"/><path d="M9.500 3.300 h8 v1 h-8.600 z" fill="#F3E3C3"/></svg>
<span class="t" style="letter-spacing:-0.240px;left:1617.2px;top:303.5px">App_Data</span>
<svg style="left:1591.7px;top:327.0px" width="19" height="19" viewBox="0 0 19 19"><path d="M1.600 4.500 h6.200 l1.200-2 h9.200 v13.500 h-16.600 z" fill="#DCB67A"/><path d="M9.500 3.300 h8 v1 h-8.600 z" fill="#F3E3C3"/></svg>
<svg style="left:1565.7px;top:328.8px" width="10" height="14" viewBox="0 0 10 14"><path d="M2 1.800 L7 7 L2 12.200 z" fill="none" stroke="#1E1E1E" stroke-width="1.200"/></svg>
<span class="t" style="letter-spacing:-0.213px;left:1617.2px;top:326.5px">App_Start</span>
<svg style="left:1591.7px;top:350.0px" width="19" height="19" viewBox="0 0 19 19"><path d="M1.600 4.500 h6.200 l1.200-2 h9.200 v13.500 h-16.600 z" fill="#DCB67A"/><path d="M9.500 3.300 h8 v1 h-8.600 z" fill="#F3E3C3"/></svg>
<svg style="left:1565.7px;top:351.8px" width="10" height="14" viewBox="0 0 10 14"><path d="M2 1.800 L7 7 L2 12.200 z" fill="none" stroke="#1E1E1E" stroke-width="1.200"/></svg>
<span class="t" style="letter-spacing:-0.478px;left:1617.2px;top:349.5px">Areas</span>
<svg style="left:1591.7px;top:373.0px" width="19" height="19" viewBox="0 0 19 19"><path d="M1.600 4.500 h6.200 l1.200-2 h9.200 v13.500 h-16.600 z" fill="#DCB67A"/><path d="M9.500 3.300 h8 v1 h-8.600 z" fill="#F3E3C3"/></svg>
<svg style="left:1565.7px;top:374.8px" width="10" height="14" viewBox="0 0 10 14"><path d="M2 1.800 L7 7 L2 12.200 z" fill="none" stroke="#1E1E1E" stroke-width="1.200"/></svg>
<span class="t" style="letter-spacing:-0.135px;left:1617.2px;top:372.5px">Content</span>
<svg style="left:1591.7px;top:396.0px" width="19" height="19" viewBox="0 0 19 19"><path d="M1.600 4.500 h6.200 l1.200-2 h9.200 v13.500 h-16.600 z" fill="#DCB67A"/><path d="M9.500 3.300 h8 v1 h-8.600 z" fill="#F3E3C3"/></svg>
<svg style="left:1565.7px;top:397.8px" width="10" height="14" viewBox="0 0 10 14"><path d="M2 1.800 L7 7 L2 12.200 z" fill="none" stroke="#1E1E1E" stroke-width="1.200"/></svg>
<span class="t" style="letter-spacing:-0.066px;left:1617.2px;top:395.5px">Controllers</span>
<svg style="left:1591.7px;top:419.0px" width="19" height="19" viewBox="0 0 19 19"><path d="M1.600 4.500 h6.200 l1.200-2 h9.200 v13.500 h-16.600 z" fill="#DCB67A"/><path d="M9.500 3.300 h8 v1 h-8.600 z" fill="#F3E3C3"/></svg>
<svg style="left:1565.7px;top:420.8px" width="10" height="14" viewBox="0 0 10 14"><path d="M2 1.800 L7 7 L2 12.200 z" fill="none" stroke="#1E1E1E" stroke-width="1.200"/></svg>
<span class="t" style="letter-spacing:-0.146px;left:1617.2px;top:418.5px">fonts</span>
<svg style="left:1591.7px;top:442.0px" width="19" height="19" viewBox="0 0 19 19"><path d="M1.600 4.500 h6.200 l1.200-2 h9.200 v13.500 h-16.600 z" fill="#DCB67A"/><path d="M9.500 3.300 h8 v1 h-8.600 z" fill="#F3E3C3"/></svg>
<svg style="left:1565.7px;top:443.8px" width="10" height="14" viewBox="0 0 10 14"><path d="M2 1.800 L7 7 L2 12.200 z" fill="none" stroke="#1E1E1E" stroke-width="1.200"/></svg>
<span class="t" style="letter-spacing:0.073px;left:1617.2px;top:441.5px">Models</span>
<svg style="left:1591.7px;top:465.0px" width="19" height="19" viewBox="0 0 19 19"><path d="M1.600 4.500 h6.200 l1.200-2 h9.200 v13.500 h-16.600 z" fill="#DCB67A"/><path d="M9.500 3.300 h8 v1 h-8.600 z" fill="#F3E3C3"/></svg>
<span class="t" style="letter-spacing:-0.128px;left:1617.2px;top:464.5px">Properties</span>
<svg style="left:1591.7px;top:488.0px" width="19" height="19" viewBox="0 0 19 19"><path d="M1.600 4.500 h6.200 l1.200-2 h9.200 v13.500 h-16.600 z" fill="#DCB67A"/><path d="M9.500 3.300 h8 v1 h-8.600 z" fill="#F3E3C3"/></svg>
<svg style="left:1565.7px;top:489.8px" width="10" height="14" viewBox="0 0 10 14"><path d="M2 1.800 L7 7 L2 12.200 z" fill="none" stroke="#1E1E1E" stroke-width="1.200"/></svg>
<span class="t" style="letter-spacing:-0.249px;left:1617.2px;top:487.5px">Scripts</span>
<svg style="left:1591.7px;top:511.0px" width="19" height="19" viewBox="0 0 19 19"><path d="M4.500 13 v-8.500 h3.700 l1.200-2 h8 v12.500 h-3" fill="#EFEFEF" stroke="#DCB67A" stroke-width="1.100"/><path d="M0.800 9.800 h12.200 l3.800 6.400 h-13 z" fill="#DCB67A"/></svg>
<svg style="left:1564.7px;top:514.5px" width="10" height="10" viewBox="0 0 10 10"><path d="M9.300 1.200 V8.700 H0.800 z" fill="#1E1E1E"/></svg>
<span class="t" style="letter-spacing:-0.390px;left:1617.2px;top:510.5px">Views</span>
<svg style="left:1614.8px;top:534.0px" width="19" height="19" viewBox="0 0 19 19"><path d="M1.600 4.500 h6.200 l1.200-2 h9.200 v13.500 h-16.600 z" fill="#DCB67A"/><path d="M9.500 3.300 h8 v1 h-8.600 z" fill="#F3E3C3"/></svg>
<svg style="left:1588.8px;top:535.8px" width="10" height="14" viewBox="0 0 10 14"><path d="M2 1.800 L7 7 L2 12.200 z" fill="none" stroke="#1E1E1E" stroke-width="1.200"/></svg>
<span class="t" style="letter-spacing:0.046px;left:1640.3px;top:533.5px">Home</span>
<svg style="left:1614.8px;top:557.0px" width="19" height="19" viewBox="0 0 19 19"><path d="M1.600 4.500 h6.200 l1.200-2 h9.200 v13.500 h-16.600 z" fill="#DCB67A"/><path d="M9.500 3.300 h8 v1 h-8.600 z" fill="#F3E3C3"/></svg>
<svg style="left:1588.8px;top:558.8px" width="10" height="14" viewBox="0 0 10 14"><path d="M2 1.800 L7 7 L2 12.200 z" fill="none" stroke="#1E1E1E" stroke-width="1.200"/></svg>
<span class="t" style="letter-spacing:-0.546px;left:1640.3px;top:556.5px">Shared</span>
<svg style="left:1614.8px;top:580.0px" width="19" height="19" viewBox="0 0 19 19"><path d="M4.500 13 v-8.500 h3.700 l1.200-2 h8 v12.500 h-3" fill="#EFEFEF" stroke="#DCB67A" stroke-width="1.100"/><path d="M0.800 9.800 h12.200 l3.800 6.400 h-13 z" fill="#DCB67A"/></svg>
<svg style="left:1587.8px;top:583.5px" width="10" height="10" viewBox="0 0 10 10"><path d="M9.300 1.200 V8.700 H0.800 z" fill="#1E1E1E"/></svg>
<span class="t" style="letter-spacing:-0.421px;left:1640.3px;top:579.5px">ViewTest</span>
<svg style="left:1636.8px;top:603.0px" width="19" height="19" viewBox="0 0 19 19"><path d="M3.500 4 h-2.500 v10 h2.500 M15.500 4 h2.500 v10 h-2.500" fill="none" stroke="#424242" stroke-width="1.300"/><circle cx="9.500" cy="9" r="1.900" fill="none" stroke="#424242" stroke-width="1.200"/><path d="M11.600 6.800 v3.400 c0 1 1.800 1 2-1 c0.300-3-1.500-5-4.200-5 c-2.800 0-4.700 2.200-4.700 4.800 c0 2.800 2 4.800 4.800 4.800 c1.200 0 2.200-0.300 3-0.900" fill="none" stroke="#424242" stroke-width="1.200"/></svg>
<span class="t" style="letter-spacing:-0.073px;left:1662.3px;top:602.5px">create.vbhtml</span>
<svg style="left:1636.8px;top:626.0px" width="19" height="19" viewBox="0 0 19 19"><path d="M3.500 4 h-2.500 v10 h2.500 M15.500 4 h2.500 v10 h-2.500" fill="none" stroke="#424242" stroke-width="1.300"/><circle cx="9.500" cy="9" r="1.900" fill="none" stroke="#424242" stroke-width="1.200"/><path d="M11.600 6.800 v3.400 c0 1 1.800 1 2-1 c0.300-3-1.500-5-4.200-5 c-2.800 0-4.700 2.200-4.700 4.800 c0 2.800 2 4.800 4.800 4.800 c1.200 0 2.200-0.300 3-0.900" fill="none" stroke="#424242" stroke-width="1.200"/></svg>
<span class="t" style="letter-spacing:-0.018px;left:1662.3px;top:625.5px">Edit.vbhtml</span>
<svg style="left:1614.8px;top:649.0px" width="19" height="19" viewBox="0 0 19 19"><path d="M3.500 4 h-2.500 v10 h2.500 M15.500 4 h2.500 v10 h-2.500" fill="none" stroke="#424242" stroke-width="1.300"/><circle cx="9.500" cy="9" r="1.900" fill="none" stroke="#424242" stroke-width="1.200"/><path d="M11.600 6.800 v3.400 c0 1 1.800 1 2-1 c0.300-3-1.500-5-4.200-5 c-2.800 0-4.700 2.200-4.700 4.800 c0 2.800 2 4.800 4.800 4.800 c1.200 0 2.200-0.300 3-0.900" fill="none" stroke="#424242" stroke-width="1.200"/></svg>
<span class="t" style="letter-spacing:-0.212px;left:1640.3px;top:648.5px">_ViewStart.vbhtml</span>
<svg style="left:1614.8px;top:672.0px" width="19" height="19" viewBox="0 0 19 19"><g transform="translate(-1.500 1)"><path d="M6 1.500 h7 l4 4 v11 h-9" fill="#F5F5F5" stroke="#424242" stroke-width="1.200"/><path d="M6 1.500 v4" stroke="#424242" stroke-width="1.200"/><path d="M13 1.500 v4 h4" fill="none" stroke="#424242" stroke-width="1.200"/><path d="M2.200 5.500 v3.300 a3 3 0 0 0 1.800 2.700 v6 h2.200 v-6 a3 3 0 0 0 1.800-2.700 v-3.300 h-1.700 v3.200 h-2.400 v-3.200 z" fill="#424242"/></g></svg>
<span class="t" style="letter-spacing:-0.077px;left:1640.3px;top:671.5px">Web.config</span>
<svg style="left:1591.7px;top:695.0px" width="19" height="19" viewBox="0 0 19 19"><g transform="translate(0 1)"><path d="M3 1.500 h8 l4 4 v11 h-12 z" fill="#F5F5F5" stroke="#424242" stroke-width="1.200"/><path d="M11 1.500 v4 h4" fill="none" stroke="#424242" stroke-width="1.200"/><path d="M7.500 9 l1 2.200 l2.300 0.200 l-1.800 1.500 l0.600 2.300 l-2.100-1.300 l-2.100 1.300 l0.600-2.300 l-1.800-1.500 l2.300-0.200 z" fill="#424242"/><path d="M5 4 v3 M5 5.500 h0" stroke="#424242" stroke-dasharray="1 1"/></g></svg>
<span class="t" style="letter-spacing:-0.061px;left:1617.2px;top:694.5px">favicon.ico</span>
<svg style="left:1591.7px;top:718.0px" width="19" height="19" viewBox="0 0 19 19"><path d="M7 1.500 h7 l4 4 v11 h-8" fill="#F5F5F5" stroke="#424242" stroke-width="1.200"/><path d="M7 1.500 v7" stroke="#424242" stroke-width="1.200"/><path d="M14 1.500 v4 h4" fill="none" stroke="#424242" stroke-width="1.200"/><g transform="translate(5 14)"><circle r="2.600" fill="none" stroke="#424242" stroke-width="1.400"/><path d="M0 -4.600 V-3 M0 4.600 V3 M-4.600 0 H-3 M4.600 0 H3 M-3.200 -3.200 L-2.200 -2.200 M3.200 3.200 L2.200 2.200 M-3.200 3.200 L-2.200 2.200 M3.200 -3.200 L2.200 -2.200" stroke="#424242" stroke-width="1.400"/></g></svg>
<span class="t" style="letter-spacing:-0.311px;left:1617.2px;top:717.5px">Global.asax</span>
<svg style="left:1591.7px;top:741.0px" width="19" height="19" viewBox="0 0 19 19"><g transform="translate(-1.500 1)"><path d="M6 1.500 h7 l4 4 v11 h-9" fill="#F5F5F5" stroke="#424242" stroke-width="1.200"/><path d="M6 1.500 v4" stroke="#424242" stroke-width="1.200"/><path d="M13 1.500 v4 h4" fill="none" stroke="#424242" stroke-width="1.200"/><path d="M2.200 5.500 v3.300 a3 3 0 0 0 1.800 2.700 v6 h2.200 v-6 a3 3 0 0 0 1.800-2.700 v-3.300 h-1.700 v3.200 h-2.400 v-3.200 z" fill="#424242"/></g></svg>
<span class="t" style="letter-spacing:-0.160px;left:1617.2px;top:740.5px">packages.config</span>
<svg style="left:1591.7px;top:764.0px" width="19" height="19" viewBox="0 0 19 19"><g transform="translate(-1.500 1)"><path d="M6 1.500 h7 l4 4 v11 h-9" fill="#F5F5F5" stroke="#424242" stroke-width="1.200"/><path d="M6 1.500 v4" stroke="#424242" stroke-width="1.200"/><path d="M13 1.500 v4 h4" fill="none" stroke="#424242" stroke-width="1.200"/><path d="M2.200 5.500 v3.300 a3 3 0 0 0 1.800 2.700 v6 h2.200 v-6 a3 3 0 0 0 1.800-2.700 v-3.300 h-1.700 v3.200 h-2.400 v-3.200 z" fill="#424242"/></g></svg>
<span class="t" style="letter-spacing:-0.047px;left:1617.2px;top:763.5px">Web.config</span>
<span class="t" style="letter-spacing:0.043px;left:1650.600px;top:188.500px">'WebApplication1' (1/1</span>
<span class="t jp" style="display:inline-block;transform-origin:0 50%;transform:scaleX(0.7205);left:1805.800px;top:188.500px">プロジェクト)</span>
<div class="red" style="left:1537px;top:620px;width:338px;height:30px"></div>
<div class="a" style="left:1530px;top:942px;width:177px;height:25px;background:#F5F5F5;border:1px solid #CCCEDB;border-top:none"></div>
<span class="t jp" style="display:inline-block;transform-origin:0 50%;transform:scaleX(0.7117);left:1537.500px;top:943.500px;color:#0E70C0">ソリューション エクスプローラー</span>
<span class="t jp" style="display:inline-block;transform-origin:0 50%;transform:scaleX(0.7195);left:1714.500px;top:943.500px;color:#444">チーム エクスプローラー</span>
<div class="a" style="left:1912px;top:90px;width:8px;height:74.500px;background:#CCCEDB"></div>
<div class="a" style="left:1912px;top:180px;width:8px;height:74.500px;background:#CCCEDB"></div>
<span class="a jp" style="letter-spacing:-0.603px;left:1888.500px;top:89px;writing-mode:vertical-rl;text-orientation:sideways;font-size:16px;line-height:20px;width:20px;color:#444">診断ツール</span>
<span class="a jp" style="letter-spacing:-0.209px;left:1888.500px;top:177.500px;writing-mode:vertical-rl;text-orientation:sideways;font-size:16px;line-height:20px;width:20px;color:#444">プロパティ</span>
</body></html>
